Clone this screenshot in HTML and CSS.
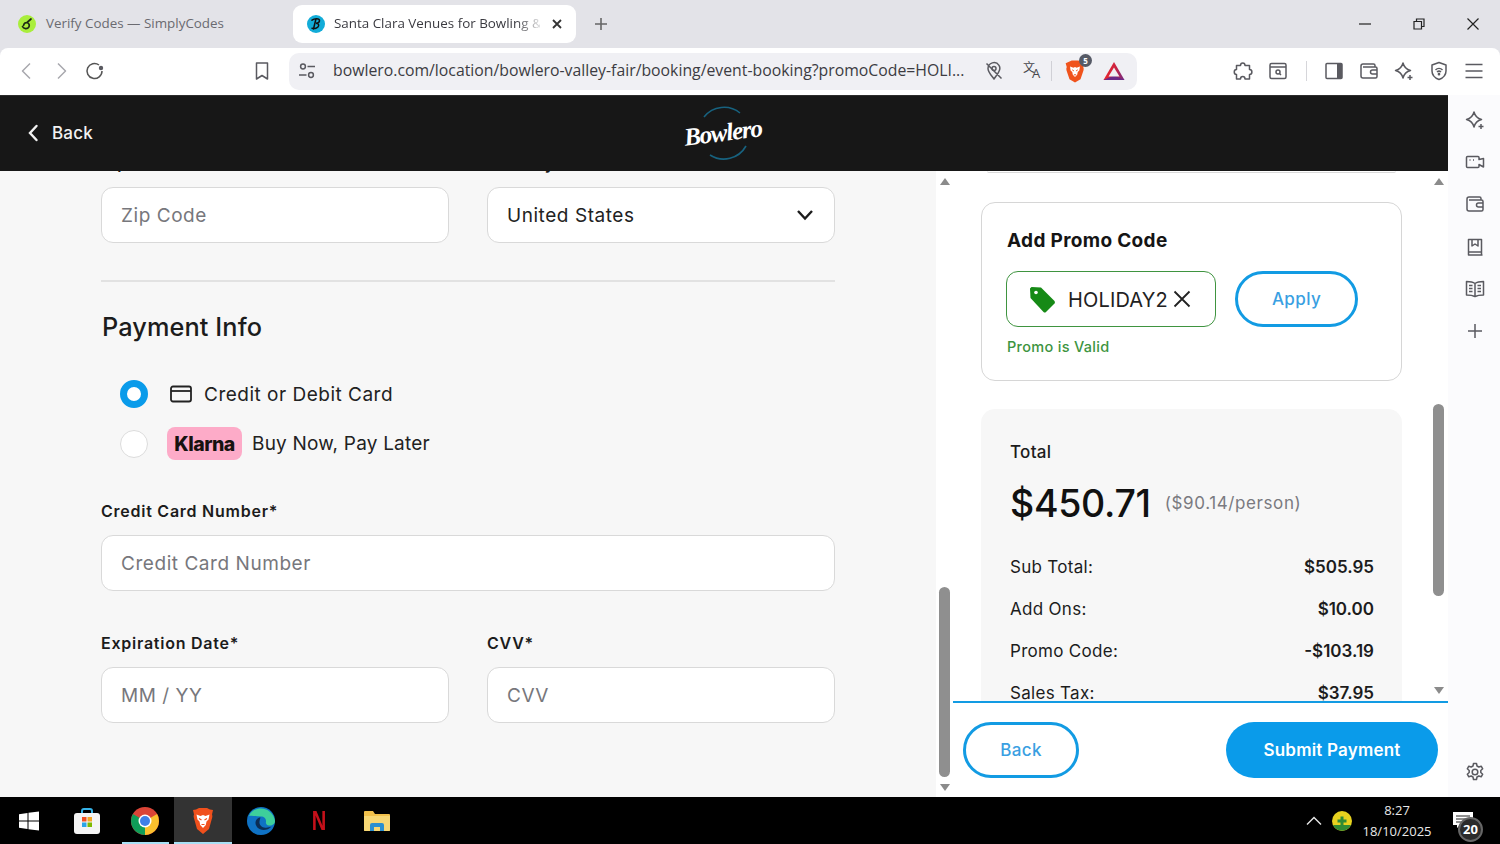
FILE: index.html
```html
<!DOCTYPE html>
<html lang="en">
<head>
<meta charset="utf-8">
<title>Santa Clara Venues for Bowling</title>
<link rel="stylesheet" href="styles.css">
</head>
<body>
<div class="window">
  <div class="tabstrip">
    <div class="tab">
      <svg class="favicon" viewBox="0 0 18 18"><circle cx="9" cy="9" r="9" fill="#a9ee3c"/><path d="M4.500 11.500c1 2.600 5 2.800 6.300.6 1-1.700.3-3.800-1.300-4.400-1.800-.6-3.600.8-3.800 2.400M9 7.500l4-3.500" fill="none" stroke="#1c2a14" stroke-width="1.700" stroke-linecap="round"/></svg>
      <span class="tab-title">Verify Codes — SimplyCodes</span>
    </div>
    <div class="tab tab-active">
      <svg class="favicon" viewBox="0 0 18 18"><circle cx="9" cy="9" r="9" fill="#12acd8"/><path d="M5 5.200c2.400-1.800 7.500-2 7.500.6 0 1.500-2 2.300-3.500 2.500 2 0 3 1 2.600 2.600-.6 2.300-4.300 3-6.600 2.300M8.800 4.500 6.500 14" fill="none" stroke="#111" stroke-width="1.500" stroke-linecap="round"/></svg>
      <span class="tab-title tab-title-fade">Santa Clara Venues for Bowling &amp;</span>
      <svg class="tab-close" viewBox="0 0 12 12"><path d="M2 2l8 8M10 2l-8 8"/></svg>
    </div>
    <svg class="new-tab" viewBox="0 0 14 14"><path d="M7 1v12M1 7h12"/></svg>
    <div class="window-controls">
      <div class="win-btn"><svg viewBox="0 0 12 12"><path d="M0 6h12"/></svg></div>
      <div class="win-btn"><svg viewBox="0 0 12 12"><path d="M1 3.500h7.500V11H1zM3.500 3.500V1H11v7.500H8.500"/></svg></div>
      <div class="win-btn"><svg viewBox="0 0 12 12"><path d="M.5.500l11 11M11.500.500l-11 11"/></svg></div>
    </div>
  </div>

  <div class="toolbar">
    <div class="tool"><svg class="ico ico-pale" viewBox="0 0 20 20"><path d="M13 2.500 5.500 10l7.500 7.500"/></svg></div>
    <div class="tool"><svg class="ico ico-pale" viewBox="0 0 20 20"><path d="M7 2.500 14.500 10 7 17.500"/></svg></div>
    <div class="tool"><svg class="ico ico-reload" viewBox="0 0 20 20"><path d="M17 10a7.500 7.500 0 1 1-3-6"/><circle class="solid" cx="16" cy="7" r="2.200"/></svg></div>
    <div class="tool tool-bookmark"><svg class="ico" viewBox="0 0 20 20"><path d="M4.500 2h11v16L10 14.500 4.500 18z"/></svg></div>
    <div class="address">
      <svg class="ico ico-sm" viewBox="0 0 20 20"><circle cx="6" cy="5.500" r="2.400"/><path d="M10.500 5.500H18M2 14h7.500"/><circle cx="14" cy="14" r="2.400"/></svg>
      <span class="url">bowlero.com/location/bowlero-valley-fair/booking/event-booking?promoCode=HOLI...</span>
      <svg class="ico addr-pin" viewBox="0 0 20 20"><path d="M10 18c-3-4-6-7-6-10.500a6 6 0 0 1 11-3.200c.8 1.200 1 3 .6 4.500-.7 3-3.600 6-5.600 9.200zM2.500 2.500l15 15"/><circle cx="10" cy="7.500" r="2"/></svg>
      <span class="addr-translate"><span class="tr-a">文</span><span class="tr-b">A</span></span>
      <span class="addr-sep"></span>
      <span class="addr-shield">
        <svg viewBox="0 0 20 22" width="22" height="25"><path d="M3.500 2.500 7 1h6l3.500 1.500 2 1-1 3.500c.5 1 .5 2 .2 3L15 18l-5 3-5-3-2.700-8c-.3-1-.3-2 .2-3l-1-3.500z" fill="#f0531c"/><path d="M5.500 6.500 8.500 7.500 10 6.800l1.500.7 3-1-.6 3.500-1.400 1.500-.5 2.500-2 2-2-2-.5-2.500L6 10z" fill="#fff"/><path d="M7.500 9.500 9 10.500M12.500 9.500 11 10.500M9 14h2" stroke="#f0531c" stroke-width=".9" fill="none"/></svg>
        <span class="shield-badge">5</span>
      </span>
      <svg class="addr-bat" viewBox="0 0 22 20" width="22" height="20"><defs><linearGradient id="batg" x1="0" y1="0" x2="1" y2="0"><stop offset="0" stop-color="#e8262c"/><stop offset=".55" stop-color="#d0243e"/><stop offset="1" stop-color="#6c2a87"/></linearGradient></defs><path d="M11 1 21.500 19H.5z" fill="url(#batg)"/><path d="M.5 19 11 14.500 21.500 19z" fill="#6c2a87"/><path d="M11 6.500 16.500 15.500h-11z" fill="#f0f0f4"/></svg>
    </div>
    <div class="tool tool-first"><svg class="ico" viewBox="0 0 20 20"><path d="M7.500 4.500C7.500 1 12 1 12 4.500h4.500v4c3.200 0 3.200 5 0 5V18H12c0-3.200-4.500-3.200-4.500 0h-4v-4.500c-3 0-3-5 0-5V4.500z"/></svg></div>
    <div class="tool"><svg class="ico" viewBox="0 0 20 20"><rect x="2" y="2.500" width="16" height="15" rx="1.500"/><path d="M2 6h16"/><circle cx="10" cy="11" r="2"/><path d="M11.500 12.500l1.500 1.500"/></svg></div>
    <span class="tool-sep"></span>
    <div class="tool"><svg class="ico" viewBox="0 0 20 20"><rect x="2" y="2.500" width="16" height="15" rx="1"/><path class="solid" d="M13 2.500h5v15h-5z"/></svg></div>
    <div class="tool"><svg class="ico" viewBox="0 0 20 20"><path d="M16 6V4.500A1.500 1.500 0 0 0 14.500 3H4a2 2 0 0 0-2 2v10a2 2 0 0 0 2 2h12.500a1.500 1.500 0 0 0 1.500-1.500v-8A1.500 1.500 0 0 0 16.500 6H4"/><path d="M18 9h-4.500a2 2 0 0 0 0 4H18"/></svg></div>
    <div class="tool"><svg class="ico" viewBox="0 0 20 20"><path d="M9 2c1 4 3.500 6.500 7.500 7.500-4 1-6.500 3.500-7.500 7.500-1-4-3.500-6.500-7.500-7.500C5.500 8.500 8 6 9 2zM16 14v5M13.500 16.500h5"/></svg></div>
    <div class="tool"><svg class="ico" viewBox="0 0 20 20"><path d="M10 1.500 17 4v6c0 4-3 7-7 8.500C6 17 3 14 3 10V4z"/><path d="M6.500 9a5 5 0 0 1 7 0M8 11a3 3 0 0 1 4 0"/><circle cx="10" cy="13.200" r=".6"/></svg></div>
    <div class="tool"><svg class="ico" viewBox="0 0 20 20"><path d="M1.500 3.500h17M1.500 10h17M1.500 16.500h17"/></svg></div>
  </div>

  <div class="viewport">
    <div class="page">
      <header class="site-header">
        <div class="head-back">
          <svg viewBox="0 0 12 18" width="12" height="18"><path d="M9.500 2 3 9l6.500 7"/></svg>
          <span>Back</span>
        </div>
        <div class="logo">
          <svg viewBox="0 0 60 60" width="60" height="60"><path d="M10 14A25.500 25.500 0 0 1 46 10M52 43A25.500 25.500 0 0 1 16 52" fill="none" stroke="#17627f" stroke-width="1.600"/></svg>
          <span class="logo-text">Bowlero</span>
        </div>
      </header>

      <div class="panes">
        <main class="form-pane">
          <div class="form-clip">
            <div class="grid-two">
              <div class="field">
                <label class="label">Zip*</label>
                <div class="input placeholder">Zip Code</div>
              </div>
              <div class="field">
                <label class="label">Country*</label>
                <div class="input select">
                  <span>United States</span>
                  <svg viewBox="0 0 18 12" width="18" height="12"><path d="M2 2l7 7.500L16 2"/></svg>
                </div>
              </div>
            </div>
            <hr class="divider">
            <h2 class="section-title">Payment Info</h2>
            <div class="pay-options">
              <div class="pay-row">
                <span class="radio radio-on"></span>
                <svg class="card-ico" viewBox="0 0 22 18" width="22" height="18"><rect x="1" y="1.500" width="20" height="15" rx="2"/><path d="M1 6h20"/></svg>
                <span class="pay-text">Credit or Debit Card</span>
              </div>
              <div class="pay-row">
                <span class="radio"></span>
                <span class="klarna">Klarna</span>
                <span class="pay-text pay-text-alt">Buy Now, Pay Later</span>
              </div>
            </div>
            <div class="field field-card">
              <label class="label">Credit Card Number*</label>
              <div class="input placeholder">Credit Card Number</div>
            </div>
            <div class="grid-two grid-exp">
              <div class="field">
                <label class="label">Expiration Date*</label>
                <div class="input placeholder">MM / YY</div>
              </div>
              <div class="field">
                <label class="label">CVV*</label>
                <div class="input placeholder">CVV</div>
              </div>
            </div>
          </div>
        </main>

        <div class="scrollbar">
          <span class="arrow-up"></span>
          <span class="scroll-thumb"></span>
          <span class="arrow-down"></span>
        </div>

        <aside class="summary">
          <div class="summary-scroll">
            <div class="prev-card"></div>
            <section class="promo-card">
              <h3 class="promo-title">Add Promo Code</h3>
              <div class="promo-row">
                <div class="promo-input">
                  <svg viewBox="0 0 30 30" width="30" height="30"><path d="M3 4.500 4.500 3 14 3.500 27.500 17a2 2 0 0 1 0 2.500L19 28a2 2 0 0 1-2.500 0L3.500 14z" fill="#168a16"/><circle cx="9" cy="8.500" r="1.800" fill="#fff"/></svg>
                  <span class="promo-code">HOLIDAY2</span>
                  <svg class="promo-x" viewBox="0 0 18 18" width="18" height="18"><path d="M1.500 1.500l15 15M16.500 1.500l-15 15"/></svg>
                </div>
                <button class="btn btn-outline btn-apply">Apply</button>
              </div>
              <p class="promo-valid">Promo is Valid</p>
            </section>
            <section class="total-card">
              <div class="total-label">Total</div>
              <div class="total-line">
                <span class="total-amount">$450.71</span>
                <span class="total-per">($90.14/person)</span>
              </div>
              <div class="line"><span>Sub Total:</span><b>$505.95</b></div>
              <div class="line"><span>Add Ons:</span><b>$10.00</b></div>
              <div class="line"><span>Promo Code:</span><b>-$103.19</b></div>
              <div class="line"><span>Sales Tax:</span><b>$37.95</b></div>
            </section>
            <div class="scrollbar scrollbar-inner">
              <span class="arrow-up"></span>
              <span class="scroll-thumb"></span>
              <span class="arrow-down"></span>
            </div>
          </div>
          <div class="summary-foot">
            <button class="btn btn-outline btn-back">Back</button>
            <button class="btn btn-solid">Submit Payment</button>
          </div>
        </aside>
      </div>
    </div>

    <nav class="sidebar">
      <div class="side-item"><svg class="ico" viewBox="0 0 20 20"><path d="M9 2c1 4 3.500 6.500 7.500 7.500-4 1-6.500 3.500-7.500 7.500-1-4-3.500-6.500-7.500-7.500C5.500 8.500 8 6 9 2zM16 14v5M13.500 16.500h5"/></svg></div>
      <div class="side-item"><svg class="ico" viewBox="0 0 20 20"><path d="M14 7.500V5.500a1 1 0 0 0-1-1H2.500a1 1 0 0 0-1 1v9a1 1 0 0 0 1 1H13a1 1 0 0 0 1-1v-2l4.500 2.500v-8.500zM4.500 8h1M8 8h1"/></svg></div>
      <div class="side-item"><svg class="ico" viewBox="0 0 20 20"><path d="M16 6V4.500A1.500 1.500 0 0 0 14.500 3H4a2 2 0 0 0-2 2v10a2 2 0 0 0 2 2h12.500a1.500 1.500 0 0 0 1.500-1.500v-8A1.500 1.500 0 0 0 16.500 6H4"/><path d="M18 9h-4.500a2 2 0 0 0 0 4H18"/></svg></div>
      <div class="side-item"><svg class="ico" viewBox="0 0 20 20"><path d="M3.500 15V2.500h13V15zM3.500 15v3h14M3.500 15h13v3M7 2.500V9l3-2 3 2V2.500"/></svg></div>
      <div class="side-item"><svg class="ico" viewBox="0 0 20 20"><path d="M10 4.500C8 3 5 2.500 1.500 2.500v13.500c3.500 0 6.500.5 8.500 1.500 2-1 5-1.500 8.500-1.500V2.500C15 2.500 12 3 10 4.500zM10 4.500v13M4 6.500h3.500M4 9.500h3.500M4 12.500h3.500M12.500 6.500H16M12.500 9.500H16M12.500 12.500H16"/></svg></div>
      <div class="side-item"><svg class="ico" viewBox="0 0 20 20"><path d="M10 3v14M3 10h14"/></svg></div>
      <div class="side-item side-gear"><svg class="ico" viewBox="0 0 20 20"><circle cx="10" cy="10" r="2.800"/><path d="M8.500 1.500h3l.5 2.500 1.800 1 2.400-.8 1.500 2.600-1.900 1.700v2l1.900 1.700-1.500 2.600-2.400-.8-1.800 1-.5 2.500h-3l-.5-2.500-1.800-1-2.400.8-1.500-2.600 1.900-1.700v-2L2.300 6.800l1.500-2.600 2.400.8 1.800-1z"/></svg></div>
    </nav>
  </div>

  <footer class="taskbar">
    <div class="task-cell"><svg viewBox="0 0 20 20" width="20" height="20"><path d="M0 3.200 8.500 2v7.500H0zM9.500 1.800 20 .5v9H9.500zM0 10.500h8.500V18L0 16.800zM9.500 10.500H20v9L9.500 18.200z" fill="#fff"/></svg></div>
    <div class="task-cell"><svg viewBox="0 0 28 28" width="28" height="28"><path d="M9 7V4a2 2 0 0 1 2-2h6a2 2 0 0 1 2 2v3" fill="none" stroke="#35b3e8" stroke-width="2"/><rect x="1" y="6" width="26" height="21" rx="3" fill="#f4f4f4"/><rect x="9" y="10" width="4.500" height="4.500" fill="#f25022"/><rect x="14.500" y="10" width="4.500" height="4.500" fill="#f5a623"/><rect x="9" y="15.500" width="4.500" height="4.500" fill="#2aa5e8"/><rect x="14.500" y="15.500" width="4.500" height="4.500" fill="#7fba00"/></svg></div>
    <div class="task-cell task-open"><svg viewBox="0 0 28 28" width="28" height="28"><circle cx="14" cy="14" r="14" fill="#db4437"/><path d="M14 14 1.900 7A14 14 0 0 0 14 28z" fill="#0f9d58"/><path d="M14 14v14A14 14 0 0 0 26.100 7z" fill="#fbc02d"/><circle cx="14" cy="14" r="6.500" fill="#fff"/><circle cx="14" cy="14" r="5" fill="#3f7fe8"/></svg></div>
    <div class="task-cell task-active"><svg viewBox="0 0 24 28" width="24" height="28"><path d="M5 2.500 8 1h8l3 1.500 3 .5-1 4.500c.5 1 .5 2 .2 3L18 22l-6 5-6-5-3.200-11.500c-.3-1-.3-2 .2-3L2 3z" fill="#f0501c"/><path d="M5.500 7.500 9.500 9 12 8l2.500 1 4-1.500-1 5-2 2-.7 3.500L12 21l-2.800-3-.7-3.500-2-2z" fill="#fff"/><path d="M8 11.500l2.500 1.500M16 11.500 13.500 13M10.500 17.500h3" stroke="#f0501c" stroke-width="1.200" fill="none"/></svg></div>
    <div class="task-cell"><svg viewBox="0 0 28 28" width="28" height="28"><circle cx="14" cy="14" r="14" fill="#0f72c4"/><path d="M2 9C5 2 13 0 19 2.500c5 2 8.500 6.500 9 11.500.1 3-3 5-6 4.500-2.500-.4-3.500-2-3-4 .2-3-2-5-5-5C9 9.500 5 8 2 9z" fill="#3ecf9b"/><path d="M13.500 10.500c-3 0-5 2.500-5 5.500s3 7 8 7c3 0 6-1 8-3.500-2 1-5 1.500-7.500 1-3-.7-5-3-4.500-6 .2-1.800 1-3.500 1-4z" fill="#0b2d55"/></svg></div>
    <div class="task-cell"><span class="netflix">N</span></div>
    <div class="task-cell"><svg viewBox="0 0 26 22" width="26" height="22"><path d="M0 2a1 1 0 0 1 1-1h8l2 3h14a1 1 0 0 1 1 1v15a1 1 0 0 1-1 1H1a1 1 0 0 1-1-1z" fill="#f1c04b"/><path d="M0 6h26v14a1 1 0 0 1-1 1H1a1 1 0 0 1-1-1z" fill="#f7d774"/><path d="M6 21v-6a2 2 0 0 1 2-2h10a2 2 0 0 1 2 2v6h-4v-4h-6v4z" fill="#2a8fd0"/></svg></div>
    <div class="tray">
      <svg class="tray-up" viewBox="0 0 16 10" width="16" height="10"><path d="M1 8.500 8 1.500l7 7"/></svg>
      <svg class="tray-app" viewBox="0 0 20 20" width="20" height="20"><circle cx="10" cy="10" r="10" fill="#e7d21f"/><path d="M1 14a10 10 0 0 0 18 0z" fill="#2e8b35"/><path d="M10 5.500v9M5.500 10h9" stroke="#2e8b35" stroke-width="3"/></svg>
      <div class="clock"><span>8:27</span><span>18/10/2025</span></div>
      <div class="notify">
        <svg viewBox="0 0 20 16" width="20" height="16"><path d="M0 0h20v13H7l-3 3v-3H0z" fill="#fff"/><path d="M3 4h14M3 7h14M3 10h9" stroke="#222" stroke-width="1"/></svg>
        <span class="notify-count">20</span>
      </div>
    </div>
  </footer>
</div>
</body>
</html>
```

FILE: styles.css
```css
* { box-sizing: border-box; }
html, body { margin: 0; padding: 0; }
body { width: 1500px; height: 844px; overflow: hidden; font-family: "Inter", "Liberation Sans", sans-serif; color: #1c1c1c; background: #e3e3e8; }
.window { display: flex; flex-direction: column; width: 1500px; height: 844px; }

/* tab strip */
.tabstrip { display: flex; align-items: center; height: 48px; padding-left: 8px; background: #e3e3e8; flex: none; }
.tab { display: flex; align-items: center; gap: 10px; width: 285px; height: 38px; padding-left: 10px; font: 13.4px/1 "Open Sans", sans-serif; color: #6a6a70; }
.favicon { width: 18px; height: 18px; flex: none; }
.tab-active { width: 283px; padding-left: 14px; gap: 9px; background: #fff; border-radius: 9px; color: #3a3a40; }
.tab-title { white-space: nowrap; }
.tab-title-fade { width: 206px; -webkit-mask-image: linear-gradient(90deg, #000 88%, rgba(0,0,0,.15) 100%); mask-image: linear-gradient(90deg, #000 88%, rgba(0,0,0,.15) 100%); }
.tab-close { width: 12px; height: 12px; margin-left: 2px; fill: none; stroke: #333; stroke-width: 1.8; }
.new-tab { width: 14px; height: 14px; margin-left: 18px; fill: none; stroke: #666; stroke-width: 1.6; }
.window-controls { display: flex; margin-left: auto; }
.win-btn { display: flex; align-items: center; justify-content: center; width: 54px; height: 48px; }
.win-btn svg { width: 12px; height: 12px; fill: none; stroke: #222; stroke-width: 1.2; }

/* toolbar */
.toolbar { display: flex; align-items: center; height: 47px; padding: 0 0 1px 10px; background: #fff; border-radius: 8px 8px 0 0; flex: none; }
.tool { display: flex; align-items: center; justify-content: center; width: 34px; height: 34px; flex: none; }
.tool-first { margin-left: 88px; width: 35px; }
.tool-first ~ .tool { width: 35px; }
.tool-bookmark { margin-left: 133px; }
.ico { width: 20px; height: 20px; fill: none; stroke: #5a5a60; stroke-width: 1.5; stroke-linejoin: round; flex: none; }
.ico .solid { fill: #5a5a60; stroke: none; }
.ico-pale { stroke: #a8a8ae; }
.ico-sm { width: 20px; height: 20px; }
.ico-reload { stroke: #555; }
.tool-sep { width: 1px; height: 20px; margin: 0 9px 0 11px; background: #d6d6da; flex: none; }
.address { display: flex; align-items: center; width: 848px; height: 37px; margin-left: 10px; padding-left: 8px; background: #f0f0f4; border-radius: 10px; flex: none; }
.url { width: 634px; margin-left: 16px; font: 15.8px/1 "Open Sans", sans-serif; color: #3c3c42; white-space: nowrap; }
.addr-pin { margin-left: 17px; }
.addr-translate { position: relative; display: flex; width: 20px; height: 20px; margin-left: 19px; color: #47474c; }
.tr-a { font: 12px/1 "Noto Sans CJK SC", sans-serif; }
.tr-b { font: 13px/1 "Open Sans", sans-serif; margin-top: 6px; margin-left: -3px; }
.addr-sep { width: 1px; height: 20px; margin-left: 8px; background: #d0d0d6; }
.addr-shield { position: relative; display: flex; margin-left: 12px; }
.shield-badge { position: absolute; top: -5px; right: -6px; width: 13px; height: 13px; border-radius: 50%; background: #565a66; color: #fff; font: bold 8px/13px "Open Sans", sans-serif; text-align: center; }
.addr-bat { margin-left: 17px; }

/* page frame */
.viewport { display: flex; height: 702px; flex: none; background: #fff; }
.page { display: flex; flex-direction: column; width: 1448px; flex: none; }
.site-header { position: relative; display: flex; align-items: center; justify-content: center; height: 76px; background: #171717; border-top: 1px solid #2c2c2c; flex: none; }
.head-back { position: absolute; left: 27px; top: 27px; display: flex; align-items: center; gap: 13px; color: #f2f2f2; font-size: 17px; font-weight: 500; letter-spacing: .2px; }
.head-back svg { fill: none; stroke: #f2f2f2; stroke-width: 2.4; stroke-linecap: round; }
.logo { position: relative; display: flex; align-items: center; justify-content: center; width: 80px; height: 60px; margin-top: -2px; }
.logo-text { position: absolute; left: 0; top: 15px; font: italic 700 25px/1.2 "Liberation Serif", serif; color: #fff; transform: rotate(-7deg); letter-spacing: -1.2px; }

.panes { display: flex; flex: 1; min-height: 0; }

/* left form */
.form-pane { width: 936px; background: #f7f7f7; overflow: hidden; flex: none; }
.form-clip { margin-top: -18px; padding: 0 101px; }
.grid-two { display: grid; grid-template-columns: 348px 348px; column-gap: 38px; }
.field { display: flex; flex-direction: column; gap: 14px; }
.label { font-size: 16px; line-height: 20px; font-weight: 600; color: #1c1c1c; letter-spacing: .75px; }
.input { display: flex; align-items: center; height: 56px; padding: 0 19px; background: #fff; border: 1px solid #d9d9d9; border-radius: 12px; font-size: 19px; letter-spacing: .55px; color: #222; }
.placeholder { color: #77777c; }
.select { justify-content: space-between; padding-right: 20px; }
.select svg { fill: none; stroke: #1c1c1c; stroke-width: 2.4; }
.divider { height: 2px; margin: 37px 0 0; border: 0; background: #e2e2e2; }
.section-title { margin: 28px 0 0 1px; font-size: 25.3px; line-height: 34px; font-weight: 500; color: #1c1c1c; letter-spacing: .1px; }
.pay-options { display: flex; flex-direction: column; gap: 19px; margin: 36px 0 0 19px; }
.pay-row { display: flex; align-items: center; height: 28px; }
.pay-row + .pay-row { height: 33px; }
.radio { width: 28px; height: 28px; background: #fff; border: 1px solid #dcdcdc; border-radius: 50%; flex: none; }
.radio-on { border: 7px solid #0a9bea; }
.card-ico { margin-left: 22px; fill: none; stroke: #222; stroke-width: 1.8; }
.pay-text { margin-left: 12px; font-size: 19px; letter-spacing: .5px; color: #222; white-space: nowrap; }
.pay-text-alt { margin-left: 10px; letter-spacing: .2px; }
.klarna { display: flex; align-items: center; justify-content: center; width: 75px; height: 33px; margin-left: 19px; background: #fdabc8; border-radius: 8px; font-size: 19.5px; font-weight: 800; color: #17120f; letter-spacing: -0.5px; }
.field-card { margin-top: 41px; }
.grid-exp { margin-top: 42px; }

/* scrollbars */
.scrollbar { display: flex; flex-direction: column; align-items: center; width: 17px; padding: 7px 0 6px; background: #fff; flex: none; }
.arrow-up { width: 0; height: 0; border: 5px solid transparent; border-top: 0; border-bottom: 7px solid #8b8b8b; flex: none; }
.arrow-down { width: 0; height: 0; border: 5px solid transparent; border-bottom: 0; border-top: 7px solid #8b8b8b; flex: none; }
.scroll-thumb { width: 11px; height: 190px; margin: auto 0 7px; background: #8f8f8f; border-radius: 6px; }

/* right summary */
.summary { display: flex; flex-direction: column; width: 495px; background: #fff; flex: none; }
.summary-scroll { position: relative; height: 530px; padding-left: 28px; overflow: hidden; flex: none; }
.scrollbar-inner { position: absolute; right: 1px; top: 0; bottom: 0; padding: 7px 0 7px; background: transparent; }
.scrollbar-inner .scroll-thumb { height: 192px; margin: 219px 0 auto; }
.prev-card { width: 409px; height: 2px; margin-left: 6px; border-bottom: 1px solid #d9d9d9; border-radius: 0 0 8px 8px; }
.promo-card { width: 421px; height: 179px; margin-top: 29px; padding: 26px 24px 0; background: #fff; border: 1px solid #d6d6d6; border-radius: 14px; }
.promo-title { margin: 0 0 0 1px; font-size: 19px; line-height: 24px; font-weight: 700; color: #151515; letter-spacing: .33px; }
.promo-row { display: flex; align-items: center; gap: 19px; margin-top: 18px; }
.promo-input { display: flex; align-items: center; width: 210px; height: 56px; padding-left: 20px; border: 1.5px solid #3f9440; border-radius: 12px; flex: none; }
.promo-code { margin-left: 11px; padding-top: 2px; font-size: 20px; letter-spacing: .15px; color: #222; }
.promo-x { margin-left: 5px; fill: none; stroke: #222; stroke-width: 1.8; flex: none; }
.btn { display: flex; align-items: center; justify-content: center; height: 56px; padding: 0; border-radius: 28px; font-family: inherit; font-size: 17px; font-weight: 500; letter-spacing: .4px; flex: none; }
.btn-outline { background: #fff; border: 3px solid #129be3; color: #3a9fe2; }
.btn-apply { width: 123px; }
.btn-back { width: 116px; }
.btn-solid { width: 212px; background: #0a9bea; border: 0; color: #fff; font-weight: 600; letter-spacing: .2px; }
.promo-valid { margin: 11px 0 0 1px; font-size: 14.5px; line-height: 18px; font-weight: 500; color: #3d9440; letter-spacing: .3px; }
.total-card { width: 421px; height: 320px; margin-top: 28px; padding: 33px 28px 0 29px; background: #f7f7f7; border-radius: 14px; }
.total-label { font-size: 17px; line-height: 20px; font-weight: 500; color: #1c1c1c; letter-spacing: .3px; }
.total-line { display: flex; align-items: center; gap: 14px; margin-top: 20px; height: 42px; }
.total-amount { font-size: 37.5px; font-weight: 500; color: #111; letter-spacing: -0.3px; }
.total-per { font-size: 17px; color: #7a7a80; letter-spacing: .6px; }
.line { display: flex; align-items: center; justify-content: space-between; height: 42px; font-size: 17px; color: #1c1c1c; letter-spacing: .3px; }
.line b { font-weight: 600; letter-spacing: 0; }
.total-line + .line { margin-top: 22px; }
.summary-foot { display: flex; align-items: center; justify-content: space-between; height: 96px; padding: 0 10px; border-top: 2px solid #129be3; flex: none; }

/* right sidebar */
.sidebar { display: flex; flex-direction: column; width: 52px; padding: 4px 0 0 1px; background: #fbfbfd; flex: none; }
.side-item { display: flex; align-items: center; justify-content: center; height: 42.2px; flex: none; }
.side-gear { margin-top: auto; margin-bottom: 4px; }

/* taskbar */
.taskbar { display: flex; align-items: center; height: 47px; background: #000; flex: none; }
.task-cell { position: relative; display: flex; align-items: center; justify-content: center; width: 58px; height: 47px; flex: none; }
.task-open::after { content: ""; position: absolute; left: 6px; right: 5px; bottom: 0; height: 2px; background: #a8e0f5; }
.task-active { background: #333; }
.task-active::after { content: ""; position: absolute; left: 0; right: 0; bottom: 0; height: 2px; background: #a8e0f5; }
.netflix { font: 700 28px/1 "Liberation Sans", sans-serif; color: #c4101a; transform: scaleX(.72); }
.tray { display: flex; align-items: center; margin-left: auto; height: 47px; color: #fff; }
.tray-up { fill: none; stroke: #e8e8e8; stroke-width: 1.4; }
.tray-app { margin-left: 10px; }
.clock { display: flex; flex-direction: column; align-items: center; gap: 3px; width: 70px; margin-left: 10px; font: 13px/18px "Open Sans", sans-serif; color: #e8e8e8; }
.notify { position: relative; display: flex; width: 34px; height: 30px; margin: 0 13px 0 21px; padding-top: 6px; }
.notify-count { position: absolute; left: 5px; top: 11px; width: 25px; height: 25px; border-radius: 50%; background: #2b2b2b; border: 2px solid #666; color: #fff; font: 700 13px/21px "Open Sans", sans-serif; text-align: center; }
```
